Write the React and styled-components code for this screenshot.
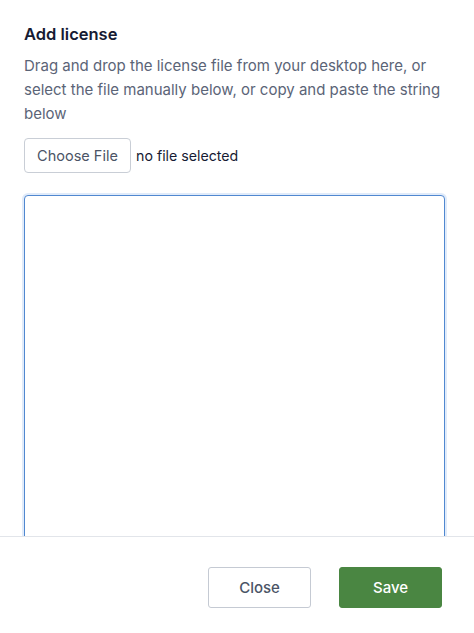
import React from "react";
import styled, { createGlobalStyle } from "styled-components";

const GlobalStyle = createGlobalStyle`
  html, body {
    margin: 0;
    padding: 0;
    background: #ffffff;
    font-family: Inter, "Noto Sans", sans-serif;
  }
`;

const Modal = styled.div`
  display: flex;
  flex-direction: column;
  height: 100vh;
  width: 100%;
`;

const Body = styled.div`
  flex: 1 1 auto;
  overflow: hidden;
  padding: 22px 29px 0 24px;
`;

const Title = styled.h2`
  margin: 0;
  font-size: 16.5px;
  line-height: 24px;
  font-weight: 600;
  color: #161b33;
`;

const Description = styled.p`
  margin: 8px 0 0;
  font-size: 15px;
  line-height: 24px;
  color: #5b6477;
`;

const FileRow = styled.div`
  display: flex;
  align-items: center;
  margin-top: 12px;
`;

const FileButton = styled.label`
  display: inline-flex;
  align-items: center;
  justify-content: center;
  box-sizing: border-box;
  width: 107px;
  height: 35px;
  border: 1px solid #c9ced6;
  border-radius: 4px;
  font-size: 14.5px;
  color: #4b5466;
  background: #ffffff;
  cursor: pointer;
`;

const HiddenInput = styled.input`
  display: none;
`;

const FileName = styled.span`
  margin-left: 5px;
  font-size: 14.2px;
  color: #161b33;
`;

const LicenseText = styled.textarea`
  display: block;
  box-sizing: border-box;
  width: 100%;
  height: 420px;
  margin-top: 22px;
  border: 1px solid #5088d0;
  border-radius: 4px;
  box-shadow: 0 0 0 2px rgba(130, 175, 235, 0.25);
  outline: none;
  resize: none;
  font-family: inherit;
  font-size: 14px;
`;

const Footer = styled.div`
  flex: 0 0 96px;
  display: flex;
  align-items: center;
  justify-content: flex-end;
  gap: 28px;
  padding: 0 32px 0 0;
  border-top: 1px solid #e2e5ea;
`;

const Button = styled.button`
  box-sizing: border-box;
  width: 103px;
  height: 41px;
  margin-top: 4px;
  border-radius: 3px;
  font-family: inherit;
  font-size: 15px;
  font-weight: 500;
  cursor: pointer;
  border: 1px solid ${p => (p.primary ? "#4a8642" : "#c5cad3")};
  background: ${p => (p.primary ? "#4a8642" : "#ffffff")};
  color: ${p => (p.primary ? "#ffffff" : "#4b5466")};
`;

export default function App() {
  return (
    <Modal>
      <GlobalStyle />
      <Body>
        <Title>Add license</Title>
        <Description>
          Drag and drop the license file from your desktop here, or select the
          file manually below, or copy and paste the string below
        </Description>
        <FileRow>
          <FileButton>
            Choose File
            <HiddenInput type="file" />
          </FileButton>
          <FileName>no file selected</FileName>
        </FileRow>
        <LicenseText />
      </Body>
      <Footer>
        <Button>Close</Button>
        <Button primary>Save</Button>
      </Footer>
    </Modal>
  );
}
